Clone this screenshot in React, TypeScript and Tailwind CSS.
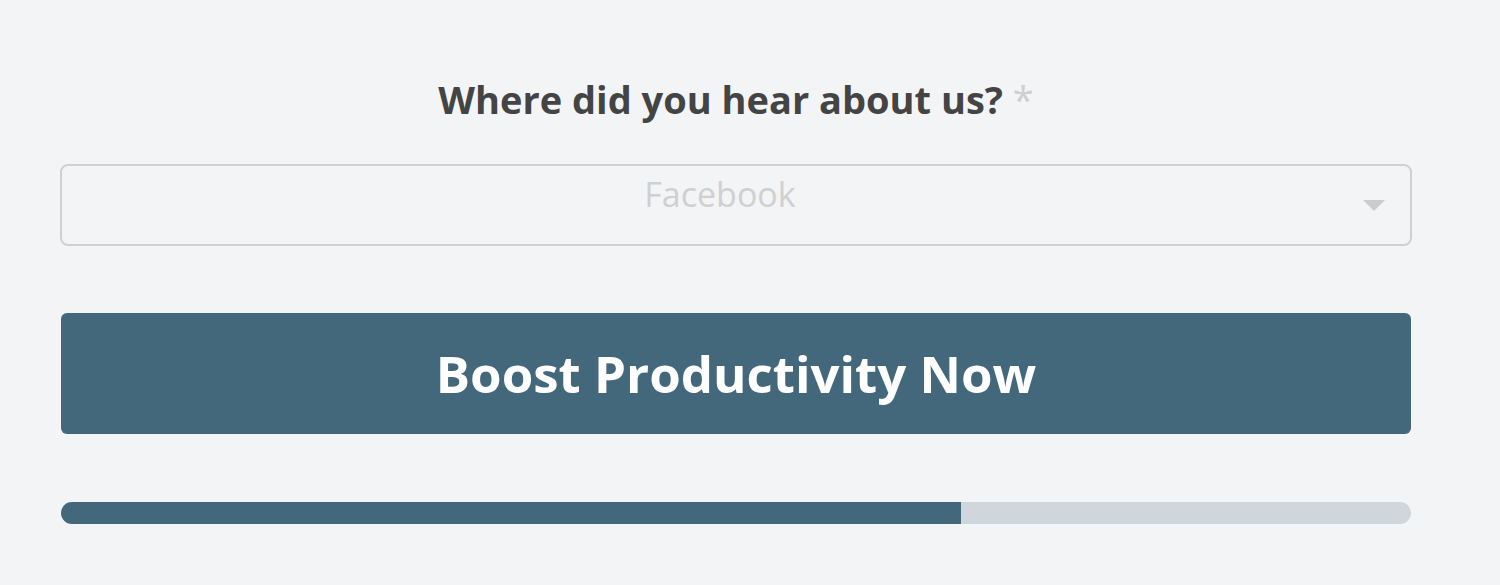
import { useState } from "react";

const SOURCES = ["Facebook", "Google", "Twitter", "A friend", "Other"];

export default function App() {
  const [source, setSource] = useState("");
  const progress = 66.67;

  return (
    <div className="min-h-[585px] w-full bg-[#f3f4f6] font-['Open_Sans',sans-serif]">
      <div className="ml-[60px] w-[1352px] pt-[70px]">
        {/* Question label */}
        <h2 className="text-center text-[38px] font-bold leading-[58px] text-[#444444]">
          Where did you hear about us? <span className="font-normal text-[#cfcfcf]">*</span>
        </h2>

        {/* Select */}
        <div className="relative mt-[36px] h-[82px] rounded-lg border-2 border-[#d0d0d0]">
          <select
            value={source}
            onChange={(e) => setSource(e.target.value)}
            className="h-full w-full appearance-none bg-transparent pb-[22px] pl-4 pr-12 text-center text-[34px] text-[#d0d0d0] outline-none"
          >
            <option value="" disabled>
              Facebook
            </option>
            {SOURCES.map((s) => (
              <option key={s} value={s}>
                {s}
              </option>
            ))}
          </select>
          <svg
            className="pointer-events-none absolute right-[25px] top-[34px]"
            width="22"
            height="12"
            viewBox="0 0 22 12"
          >
            <path d="M0 0h22L11 11z" fill="#cccccc" />
          </svg>
        </div>

        {/* CTA */}
        <button className="mx-px mt-[67px] flex h-[121px] w-[1350px] items-center justify-center rounded-md bg-[#44687b] text-[51px] font-bold text-white">
          Boost Productivity Now
        </button>

        {/* Progress */}
        <div className="mx-px mt-[68px] h-[22px] w-[1350px] overflow-hidden rounded-full bg-[#cfd6dc]">
          <div className="h-full bg-[#44687b]" style={{ width: `${progress}%` }} />
        </div>
      </div>
    </div>
  );
}
